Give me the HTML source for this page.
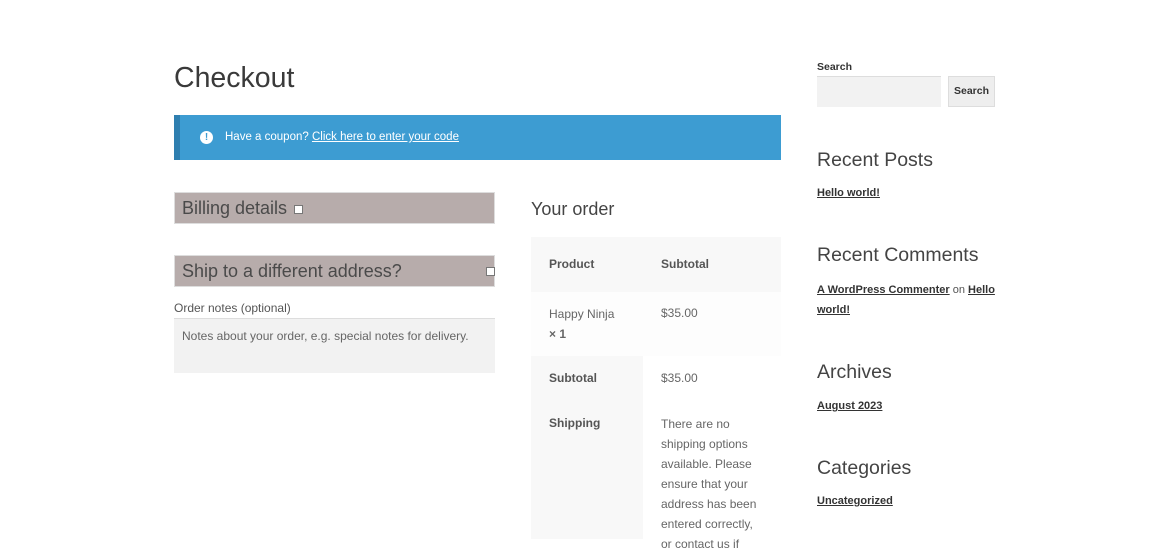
<!DOCTYPE html>
<html><head><meta charset="utf-8"><style>
body{margin:0;width:1170px;height:539px;overflow:hidden;background:#fff;font-family:"Liberation Sans",sans-serif;color:#6d6d6d;position:relative}
.a{position:absolute;white-space:nowrap}
.sl{font-size:11px;font-weight:bold;color:#333;text-decoration:underline}
.sh{font-size:19.5px;color:#444;font-weight:300}
</style></head><body>
<div class="a" style="left:174px;top:62px;font-size:28.5px;color:#3a3a3a;font-weight:300">Checkout</div>
<div class="a" style="left:174px;top:115px;width:607px;height:45px;background:#3d9cd2;border-left:6px solid #2f7fb0;box-sizing:border-box"></div>
<div class="a" style="left:200px;top:131px;width:13px;height:13px;border-radius:50%;background:#fff;color:#3d9cd2;font-size:10px;font-weight:bold;text-align:center;line-height:13px">!</div>
<div class="a" style="left:225px;top:131px;font-size:11.5px;color:#fff">Have a coupon? <u>Click here to enter your code</u></div>
<div class="a" style="left:174px;top:192px;width:321px;height:32px;background:#b7acab;border:1px solid #ddd;box-sizing:border-box"></div>
<div class="a" style="left:182px;top:198px;font-size:18px;color:#4a4a4a;font-weight:300">Billing details</div>
<div class="a" style="left:294px;top:205px;width:7px;height:7px;background:#fff;border:1px solid #777"></div>
<div class="a" style="left:174px;top:255px;width:321px;height:32px;background:#b7acab;border:1px solid #ddd;box-sizing:border-box"></div>
<div class="a" style="left:182px;top:261px;font-size:18px;color:#4a4a4a;font-weight:300">Ship to a different address?</div>
<div class="a" style="left:486px;top:267px;width:7px;height:7px;background:#fff;border:1px solid #777"></div>
<div class="a" style="left:174px;top:301px;font-size:12px;color:#555">Order notes (optional)</div>
<div class="a" style="left:174px;top:318px;width:321px;height:55px;background:#f2f2f2;border-top:1px solid #ddd;box-sizing:border-box"></div>
<div class="a" style="left:182px;top:329px;font-size:12px;color:#666">Notes about your order, e.g. special notes for delivery.</div>
<div class="a" style="left:531px;top:199px;font-size:18px;color:#444;font-weight:300">Your order</div>
<div class="a" style="left:531px;top:237px;width:250px;height:55px;background:#f8f8f8"></div>
<div class="a" style="left:531px;top:292px;width:250px;height:64px;background:#fdfdfd"></div>
<div class="a" style="left:531px;top:356px;width:112px;height:183px;background:#f8f8f8"></div>
<div class="a" style="left:549px;top:257px;font-size:12px;font-weight:bold;color:#555">Product</div>
<div class="a" style="left:661px;top:257px;font-size:12px;font-weight:bold;color:#555">Subtotal</div>
<div class="a" style="left:549px;top:304px;font-size:12px;line-height:20px;color:#666">Happy Ninja<br><b>×&nbsp;1</b></div>
<div class="a" style="left:661px;top:306px;font-size:12px;color:#666">$35.00</div>
<div class="a" style="left:549px;top:371px;font-size:12px;font-weight:bold;color:#555">Subtotal</div>
<div class="a" style="left:661px;top:371px;font-size:12px;color:#666">$35.00</div>
<div class="a" style="left:549px;top:416px;font-size:12px;font-weight:bold;color:#555">Shipping</div>
<div class="a" style="left:661px;top:414px;font-size:12px;line-height:20px;color:#666">There are no<br>shipping options<br>available. Please<br>ensure that your<br>address has been<br>entered correctly,<br>or contact us if</div>
<div class="a" style="left:817px;top:61px;font-size:10.5px;font-weight:bold;color:#333">Search</div>
<div class="a" style="left:817px;top:76px;width:124px;height:31px;background:#f2f2f2;border-top:1px solid #ddd;box-sizing:border-box"></div>
<div class="a" style="left:948px;top:76px;width:47px;height:31px;background:#eee;border:1px solid #ddd;box-sizing:border-box;font-size:10.5px;font-weight:bold;color:#333;text-align:center;line-height:29px">Search</div>
<div class="a sh" style="left:817px;top:149px">Recent Posts</div>
<div class="a sl" style="left:817px;top:187px">Hello world!</div>
<div class="a sh" style="left:817px;top:244px">Recent Comments</div>
<div class="a" style="left:817px;top:280px;font-size:11px;line-height:20px;color:#555"><span class="sl">A WordPress Commenter</span> on <span class="sl">Hello</span><br><span class="sl">world!</span></div>
<div class="a sh" style="left:817px;top:361px">Archives</div>
<div class="a sl" style="left:817px;top:400px">August 2023</div>
<div class="a sh" style="left:817px;top:457px">Categories</div>
<div class="a sl" style="left:817px;top:495px">Uncategorized</div>
</body></html>
